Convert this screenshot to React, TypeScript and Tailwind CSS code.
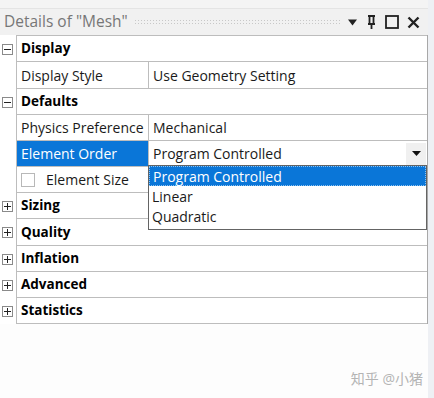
import React from 'react';

const FONT = { fontFamily: '"Open Sans", "Noto Sans", "Noto Sans CJK SC", sans-serif' };

const Toggle: React.FC<{ open?: boolean }> = ({ open }) => (
  <div className="w-[11px] h-[11px] border border-[#8a8a8a] bg-white flex items-center justify-center">
    <svg width="7" height="7" viewBox="0 0 7 7">
      <path d="M0 3.5H7" stroke="#222" strokeWidth="1" />
      {!open && <path d="M3.5 0V7" stroke="#222" strokeWidth="1" />}
    </svg>
  </div>
);

const Group: React.FC<{ label: string; open?: boolean; tall?: boolean }> = ({ label, open, tall }) => (
  <div className={`flex ${tall ? 'h-[27px]' : 'h-[26px]'}`}>
    <div className="w-[16px] flex items-center justify-start pl-[2px]">
      <Toggle open={open} />
    </div>
    <div className="flex-1 border-l border-b border-[#bdbdbd] flex items-center pl-[4px] text-[13.5px] font-bold text-black">
      {label}
    </div>
  </div>
);

const Prop: React.FC<{ label: React.ReactNode; value?: React.ReactNode; selected?: boolean; tall?: boolean }> = ({
  label,
  value,
  selected,
  tall,
}) => (
  <div className={`flex ${tall ? 'h-[27px]' : 'h-[26px]'}`}>
    <div className="w-[16px]" />
    <div
      className={`w-[132px] border-l border-b border-[#bdbdbd] flex items-center pl-[4px] text-[14px] ${
        selected ? 'bg-[#0a76d8] text-white' : 'text-[#1a1a1a]'
      }`}
    >
      {label}
    </div>
    <div className="flex-1 border-l border-b border-[#bdbdbd] flex items-center text-[14px] text-[#1a1a1a]">
      {value}
    </div>
  </div>
);

export default function App() {
  return (
    <div className="w-[434px] h-[398px] bg-[#eef0f4] flex overflow-hidden" style={FONT}>
      <div className="w-[428px] h-full flex flex-col bg-[#fbfbfb]">
        <div className="h-[9px] bg-[#f4f4f4] border-b border-[#e4e4e4]" />
        <div className="h-[26px] flex items-center bg-[#f1f1f1] pl-[4px] pr-[8px]">
          <span className="text-[15.5px] text-[#777] whitespace-nowrap">Details of "Mesh"</span>
          <div className="flex-1 h-[6px] mx-[6px] bg-[radial-gradient(#c8c8c8_1px,transparent_1px)] bg-[length:3px_3px]" />
          <div className="flex items-center gap-[8px] text-[#222]">
            <svg width="11" height="7" viewBox="0 0 11 7"><path d="M1 0.5H10L5.5 6.5Z" fill="#222" /></svg>
            <svg width="11" height="15" viewBox="0 0 11 15">
              <path d="M3.5 1V9M7.5 1V9M2 9H9M2 1H9M5.5 9V14" stroke="#222" strokeWidth="1.8" fill="none" />
            </svg>
            <svg width="14" height="14" viewBox="0 0 14 14"><rect x="1" y="1" width="12" height="12" stroke="#222" strokeWidth="1.8" fill="none" /></svg>
            <svg width="13" height="13" viewBox="0 0 13 13"><path d="M1.5 1.5L11.5 11.5M11.5 1.5L1.5 11.5" stroke="#222" strokeWidth="2.4" /></svg>
          </div>
        </div>
        <div className="relative bg-white border-r border-[#a8a8a8]">
          <div className="border-t border-[#bdbdbd] ml-[16px]" />
          <Group label="Display" open />
          <Prop label="Display Style" tall value={<span className="pl-[4px]">Use Geometry Setting</span>} />
          <Group label="Defaults" open />
          <Prop label="Physics Preference" value={<span className="pl-[4px]">Mechanical</span>} />
          <Prop
            label="Element Order"
            selected
            value={
              <div className="flex-1 h-full flex items-center justify-between">
                <span className="pl-[4px]">Program Controlled</span>
                <div className="w-[20px] h-[22px] mr-[1px] bg-[#f0f0f0] flex items-center justify-center">
                  <svg width="9" height="5" viewBox="0 0 9 5"><path d="M0 0H9L4.5 5Z" fill="#111" /></svg>
                </div>
              </div>
            }
          />
          <Prop
            label={
              <div className="flex items-center">
                <div className="w-[14px] h-[14px] border border-[#b8b8b8] bg-white mr-[11px]" />
                <span>Element Size</span>
              </div>
            }
          />
          <Group label="Sizing" />
          <Group label="Quality" tall />
          <Group label="Inflation" />
          <Group label="Advanced" />
          <Group label="Statistics" />
          <div className="absolute left-[148px] top-[130px] w-[279px] h-[65px] bg-white border border-[#646464] flex flex-col text-[14px] text-[#1a1a1a]">
            <div className="h-[20px] bg-[#0a76d8] text-white flex items-center pl-[3px] border border-dotted border-[#8cc2f0]">
              Program Controlled
            </div>
            <div className="h-[20px] flex items-center pl-[3px]">Linear</div>
            <div className="h-[20px] flex items-center pl-[3px]">Quadratic</div>
          </div>
        </div>
        <div className="flex-1 bg-[#fdfdfd] flex items-end justify-end pr-[5px] pb-[9px]">
          <span className="text-[14px] text-[#b4b4b4]">知乎 @小猪</span>
        </div>
      </div>
    </div>
  );
}
